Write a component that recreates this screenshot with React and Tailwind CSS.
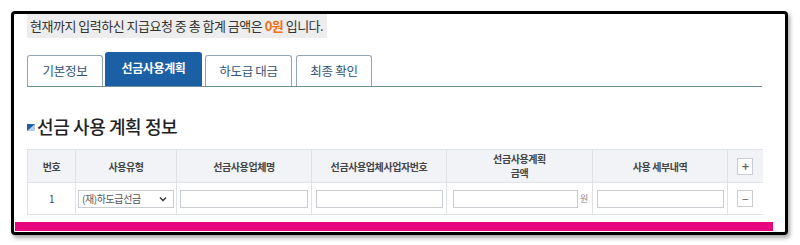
import React from 'react';

const cols = [48, 101, 135, 135, 146, 135, 35];

function Tab({ label, active, w, ml }) {
  if (active) {
    return (
      <div
        className={`${ml} ${w} h-[34px] bg-[#1b5fa4] rounded-t-[3px] flex items-center justify-center text-white text-[12px] font-bold tracking-[-0.4px] pb-[2px]`}
      >
        {label}
      </div>
    );
  }
  return (
    <div
      className={`${ml} ${w} h-[31px] bg-white border border-b-0 border-[#8ea6b5] rounded-t-[3px] flex items-center justify-center text-[#2f5476] text-[12.5px] tracking-[-0.3px]`}
    >
      {label}
    </div>
  );
}

function SquareBtn({ children }) {
  return (
    <div className="w-[16px] h-[17px] border border-[#c9ccd0] bg-white flex items-center justify-center text-[#666] text-[12px] leading-none">
      {children}
    </div>
  );
}

export default function App() {
  return (
    <div className="w-[800px] h-[245px] bg-white pt-[11px] pl-[11px] font-['Noto_Sans_CJK_KR','Noto_Sans',sans-serif]">
      <div className="w-[777px] h-[224px] border-[3px] border-black rounded-[4px] bg-white shadow-[2px_3px_4px_rgba(0,0,0,0.35)] flex flex-col">
        <div className="pl-[13px] pr-[23px]">
          {/* total notice */}
          <div className="w-fit h-[24px] bg-[#ededed] flex items-center pl-[3px] pr-[4px] whitespace-nowrap text-[13px] text-[#333] tracking-[-0.5px]">
            현재까지 입력하신 지급요청 중 총 합계 금액은&nbsp;<span className="text-[#f07018] font-bold">0원</span>&nbsp;입니다.
          </div>

          {/* tabs */}
          <div className="mt-[14px] flex items-end border-b border-[#6f8e9c]">
            <Tab label="기본정보" w="w-[76px]" ml="ml-0" />
            <Tab label="선금사용계획" active w="w-[97px]" ml="ml-[2px]" />
            <Tab label="하도급 대금" w="w-[87px]" ml="ml-[3px]" />
            <Tab label="최종 확인" w="w-[76px]" ml="ml-[4px]" />
          </div>

          {/* section heading */}
          <div className="mt-[26px] h-[26px] flex items-center">
            <svg width="8" height="7" viewBox="0 0 8 7" className="mr-[2px] mt-[3px]">
              <rect x="0" y="0" width="8" height="7" fill="#b9cce4" />
              <polygon points="0,0 8,0 0,7" fill="#1b5fa4" />
            </svg>
            <span className="text-[18px] font-medium text-[#222] tracking-[-0.4px]">선금 사용 계획 정보</span>
          </div>

          {/* table */}
          <table className="mt-[10px] border-collapse table-fixed w-[735px] text-[10px] tracking-[-0.4px]">
            <colgroup>
              {cols.map((c, i) => (
                <col key={i} style={{ width: c }} />
              ))}
            </colgroup>
            <thead>
              <tr className="h-[33px] bg-[#f1f3f6] text-[#444] font-bold">
                <th className="border border-[#dfe2e6] font-bold">번호</th>
                <th className="border border-[#dfe2e6] font-bold">사용유형</th>
                <th className="border border-[#dfe2e6] font-bold">선금사용업체명</th>
                <th className="border border-[#dfe2e6] font-bold">선금사용업체사업자번호</th>
                <th className="border border-[#dfe2e6] font-bold leading-[14px]">
                  선금사용계획
                  <br />
                  금액
                </th>
                <th className="border border-[#dfe2e6] font-bold">사용 세부내역</th>
                <th className="border-y border-l border-[#dfe2e6]">
                  <div className="flex justify-center">
                    <SquareBtn>+</SquareBtn>
                  </div>
                </th>
              </tr>
            </thead>
            <tbody>
              <tr className="h-[32px] text-[#444]">
                <td className="border border-[#dfe2e6] text-center">1</td>
                <td className="border border-[#dfe2e6] px-[2px]">
                  <div className="w-[96px] h-[18px] border border-[#c9ccd0] flex items-center justify-between pl-[3px] pr-[6px] text-[10px] text-[#555]">
                    <span>(재)하도급선금</span>
                    <svg width="8" height="6" viewBox="0 0 8 6">
                      <path d="M1 1.5 L4 4.5 L7 1.5" stroke="#333" strokeWidth="1.4" fill="none" />
                    </svg>
                  </div>
                </td>
                <td className="border border-[#dfe2e6] px-[3px]">
                  <div className="h-[18px] border border-[#c9ccd0] bg-white" />
                </td>
                <td className="border border-[#dfe2e6] pl-[4px] pr-[3px]">
                  <div className="h-[18px] border border-[#c9ccd0] bg-white" />
                </td>
                <td className="border border-[#dfe2e6] pl-[6px] pr-[4px]">
                  <div className="flex items-center">
                    <div className="w-[125px] h-[18px] border border-[#c9ccd0] bg-white" />
                    <span className="ml-[2px] text-[#888] text-[9px]">원</span>
                  </div>
                </td>
                <td className="border border-[#dfe2e6] pl-[4px] pr-[3px]">
                  <div className="h-[18px] border border-[#c9ccd0] bg-white" />
                </td>
                <td className="border-y border-l border-[#dfe2e6]">
                  <div className="flex justify-center">
                    <SquareBtn>−</SquareBtn>
                  </div>
                </td>
              </tr>
            </tbody>
          </table>
        </div>

        {/* pink bottom bar */}
        <div className="mt-[7px] ml-[1px] mr-[12px] h-[9px] bg-[#e8067e]" />
      </div>
    </div>
  );
}
